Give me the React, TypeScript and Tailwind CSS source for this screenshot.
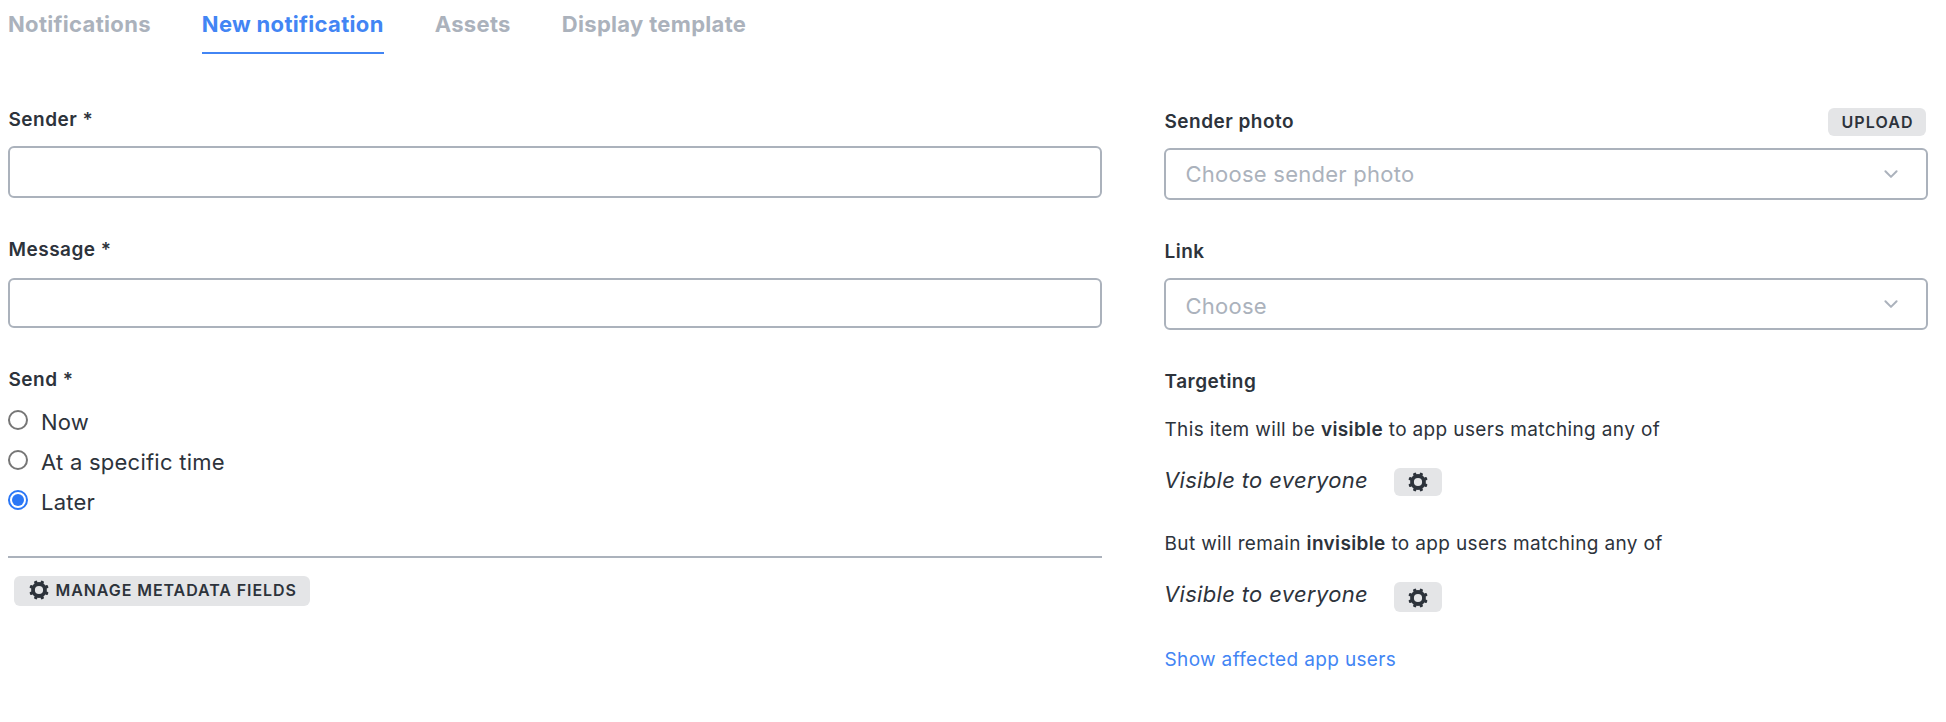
import React from "react";

const TABS = ["Notifications", "New notification", "Assets", "Display template"];
const SEND_OPTIONS = ["Now", "At a specific time", "Later"];
const GEAR_TEETH = [22.5, 67.5, 112.5, 157.5, 202.5, 247.5, 292.5, 337.5];

function GearIcon() {
  return (
    <svg className="h-5 w-5 shrink-0" viewBox="-10 -10 20 20" fill="currentColor">
      <circle r="6" fill="none" stroke="currentColor" strokeWidth="3.8" />
      {GEAR_TEETH.map((angle) => (
        <rect
          key={angle}
          x="-1.6"
          y="-9.8"
          width="3.2"
          height="4"
          rx="0.9"
          transform={`rotate(${angle})`}
        />
      ))}
    </svg>
  );
}

function Label(props: { children: React.ReactNode }) {
  return (
    <p className="pl-[0.5px] text-[19px] leading-7 font-semibold tracking-[0.48px]">
      {props.children}
    </p>
  );
}

function Select(props: { placeholder: string; textClass?: string }) {
  return (
    <div className="flex h-[52px] items-center justify-between rounded-md border-2 border-[#abb2bc] pr-[27px] pl-[19.5px] text-[#abb2bc]">
      <span className={`text-[22px] leading-7 tracking-[0.25px] ${props.textClass ?? ""}`}>
        {props.placeholder}
      </span>
      <svg
        className="h-2.5 w-4"
        viewBox="0 0 16 10"
        fill="none"
        stroke="currentColor"
        strokeWidth="2"
        strokeLinecap="round"
        strokeLinejoin="round"
      >
        <path d="M2.4 2.2 8 7.9l5.6-5.7" />
      </svg>
    </div>
  );
}

function Radio(props: { label: string; checked: boolean }) {
  const { label, checked } = props;

  return (
    <label className="flex h-10 items-center gap-[13px]">
      <span
        className={`flex h-5 w-5 items-center justify-center rounded-full border-2 ${
          checked ? "border-[#2b77f6]" : "border-[#767676]"
        }`}
      >
        {checked && <span className="h-3 w-3 rounded-full bg-[#2b77f6]" />}
      </span>
      <span className="pt-1 text-[22px] leading-7 tracking-[0.25px]">{label}</span>
    </label>
  );
}

const App: React.FC = () => {
  return (
    <div className="h-[722px] w-[1946px] overflow-hidden bg-white pl-2 font-['Inter',sans-serif] text-[#2d333b]">
      <nav className="flex gap-[51px] pt-2.5">
        {TABS.map((tab) => (
          <a
            key={tab}
            className={`border-b-2 pb-3.5 text-[22px] leading-7 font-bold tracking-[0.32px] ${
              tab === "New notification"
                ? "border-[#4285f4] text-[#4285f4]"
                : "border-transparent text-[#abb2bc]"
            }`}
          >
            {tab}
          </a>
        ))}
      </nav>

      <div className="flex gap-[62px]">
        <section className="w-[1094px] pt-[52px]">
          <Label>Sender *</Label>
          <input className="mt-3 block h-[52px] w-full rounded-md border-2 border-[#abb2bc]" />

          <div className="mt-[38px]">
            <Label>Message *</Label>
            <input className="mt-3.5 block h-[50px] w-full rounded-md border-2 border-[#abb2bc]" />
          </div>

          <div className="mt-[38px]">
            <Label>Send *</Label>
            <div className="mt-1.5">
              {SEND_OPTIONS.map((option) => (
                <Radio key={option} label={option} checked={option === "Later"} />
              ))}
            </div>
          </div>

          <hr className="mt-9 border-t-2 border-[#abb2bc]" />
          <button className="mt-[18px] ml-1.5 flex h-[30px] w-[296px] items-center gap-[7px] rounded-md bg-[#e4e5e7] pb-0.5 pl-[14.5px] text-base font-semibold tracking-[0.92px] whitespace-nowrap">
            <GearIcon />
            MANAGE METADATA FIELDS
          </button>
        </section>

        <section className="w-[764px] pt-[54px]">
          <div className="flex h-10 items-start justify-between pr-0.5">
            <Label>Sender photo</Label>
            <button className="h-7 w-[98px] rounded-md bg-[#e4e5e7] pl-px text-base leading-7 font-semibold tracking-[1.1px]">
              UPLOAD
            </button>
          </div>
          <Select placeholder="Choose sender photo" />

          <div className="mt-[38px] mb-3">
            <Label>Link</Label>
          </div>
          <Select placeholder="Choose" textClass="pt-1" />

          <div className="mt-[38px]">
            <Label>Targeting</Label>
          </div>
          <p className="mt-5 pl-[0.5px] text-[19px] leading-7 tracking-[0.36px]">
            This item will be <b className="font-semibold">visible</b> to app users matching any of
          </p>
          <div className="mt-[22px] flex h-[30px] items-start">
            <i className="w-[230px] text-[22px] leading-7 tracking-[0.33px]">Visible to everyone</i>
            <button className="mt-0.5 flex h-7 w-12 items-center justify-center rounded-md bg-[#e4e5e7] pr-px">
              <GearIcon />
            </button>
          </div>

          <p className="mt-[34px] pl-[0.5px] text-[19px] leading-7 tracking-[0.36px]">
            But will remain <b className="font-semibold">invisible</b> to app users matching any of
          </p>
          <div className="mt-[22px] flex h-[34px] items-start">
            <i className="w-[230px] text-[22px] leading-7 tracking-[0.33px]">Visible to everyone</i>
            <button className="mt-0.5 flex h-[30px] w-12 items-center justify-center rounded-md bg-[#e4e5e7] pt-px pr-px">
              <GearIcon />
            </button>
          </div>

          <a className="mt-8 block pl-[0.5px] text-[19px] leading-7 tracking-[0.35px] text-[#4285f4]">
            Show affected app users
          </a>
        </section>
      </div>
    </div>
  );
};

export default App;
